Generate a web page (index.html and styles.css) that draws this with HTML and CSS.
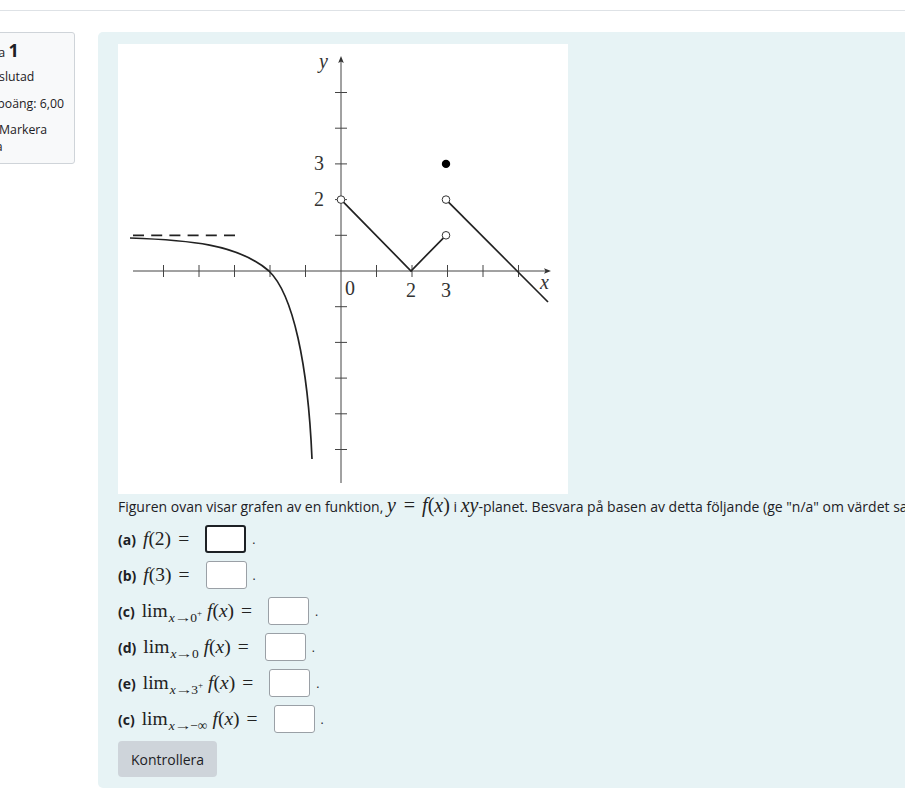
FILE: index.html
```html
<!DOCTYPE html>
<html lang="sv">
<head>
<meta charset="utf-8">
<title>Fråga 1</title>
<link rel="stylesheet" href="styles.css">
</head>
<body>
<div class="topbar"></div>
<div class="page">
  <div class="info">
    <div class="qno">Fråga <span class="num">1</span></div>
    <div class="state">Ej avslutad</div>
    <div class="grade">Maxpoäng: 6,00</div>
    <div class="flag"><svg class="flagicon" width="16" height="14" viewBox="0 0 16 14"><path d="M2 1v12M2 2h9l-2 3 2 3H2" fill="none" stroke="#6a737b" stroke-width="1.4"/></svg>Markera fråga</div>
  </div>
  <div class="content">
    <div class="figure">
      <svg width="450" height="450" viewBox="0 0 450 450" xmlns="http://www.w3.org/2000/svg">
        <g stroke="#444" stroke-width="1" fill="none">
          <line x1="15" y1="227" x2="430" y2="227"/>
          <line x1="223" y1="439" x2="223" y2="15"/>
          <line x1="45.5" y1="221" x2="45.5" y2="233"/>
          <line x1="81" y1="221" x2="81" y2="233"/>
          <line x1="116.5" y1="221" x2="116.5" y2="233"/>
          <line x1="152" y1="221" x2="152" y2="233"/>
          <line x1="187.5" y1="221" x2="187.5" y2="233"/>
          <line x1="258.5" y1="221" x2="258.5" y2="233"/>
          <line x1="294" y1="221" x2="294" y2="233"/>
          <line x1="329.5" y1="221" x2="329.5" y2="233"/>
          <line x1="365" y1="221" x2="365" y2="233"/>
          <line x1="400.5" y1="221" x2="400.5" y2="233"/>
          <line x1="217" y1="48.5" x2="229" y2="48.5"/>
          <line x1="217" y1="84.2" x2="229" y2="84.2"/>
          <line x1="217" y1="119.9" x2="229" y2="119.9"/>
          <line x1="217" y1="155.6" x2="229" y2="155.6"/>
          <line x1="217" y1="191.3" x2="229" y2="191.3"/>
          <line x1="217" y1="262.7" x2="229" y2="262.7"/>
          <line x1="217" y1="298.4" x2="229" y2="298.4"/>
          <line x1="217" y1="334.1" x2="229" y2="334.1"/>
          <line x1="217" y1="369.8" x2="229" y2="369.8"/>
          <line x1="217" y1="405.5" x2="229" y2="405.5"/>
        </g>
        <path d="M223 12 L220.2 19 L223 17.5 L225.8 19 Z" fill="#333"/>
        <path d="M433 227 L426 224.2 L427.5 227 L426 229.8 Z" fill="#333"/>
        <g font-family="'Liberation Serif', 'DejaVu Serif', serif" font-size="20" fill="#333">
          <text x="201" y="24" font-style="italic">y</text>
          <text x="422" y="245" font-style="italic">x</text>
          <text x="227" y="251">0</text>
          <text x="288" y="253">2</text>
          <text x="323" y="253">3</text>
          <text x="196" y="126">3</text>
          <text x="196" y="162">2</text>
        </g>
        <line x1="15" y1="191.3" x2="117" y2="191.3" stroke="#222" stroke-width="1.7" stroke-dasharray="11 7.2"/>
        <path d="M12 194 C 70 196 120 200 151 227 C 175 250 190 320 194 415" stroke="#222" stroke-width="1.7" fill="none"/>
        <polyline points="223,155.6 293,227 328,191.3" stroke="#222" stroke-width="1.7" fill="none"/>
        <line x1="328" y1="155.6" x2="430" y2="258" stroke="#222" stroke-width="1.7"/>
        <circle cx="223" cy="155.6" r="3.8" fill="#fff" stroke="#333" stroke-width="1"/>
        <circle cx="328" cy="191.3" r="3.8" fill="#fff" stroke="#333" stroke-width="1"/>
        <circle cx="328" cy="155.6" r="3.8" fill="#fff" stroke="#333" stroke-width="1"/>
        <circle cx="328" cy="119.9" r="4.2" fill="#000"/>
      </svg>
    </div>
    <p class="prompt">Figuren ovan visar grafen av en funktion, <span class="m"><i>y</i><span class="eq">=</span><i>f</i>(<i>x</i>)</span> i <span class="m"><i>xy</i></span>-planet. Besvara på basen av detta följande (ge "n/a" om värdet saknas).</p>
    <div class="row first"><b class="lbl">(a)</b><span class="m"><i>f</i>(2)<span class="eq">=</span></span><span class="box focus"></span><span class="dot">.</span></div>
    <div class="row"><b class="lbl">(b)</b><span class="m"><i>f</i>(3)<span class="eq">=</span></span><span class="box"></span><span class="dot">.</span></div>
    <div class="row"><b class="lbl">(c)</b><span class="m">lim<span class="sub"><i>x</i><span class="arr">→</span>0<sup>+</sup></span><i>f</i>(<i>x</i>)<span class="eq">=</span></span><span class="box"></span><span class="dot">.</span></div>
    <div class="row"><b class="lbl">(d)</b><span class="m">lim<span class="sub"><i>x</i><span class="arr">→</span>0</span><i>f</i>(<i>x</i>)<span class="eq">=</span></span><span class="box"></span><span class="dot">.</span></div>
    <div class="row"><b class="lbl">(e)</b><span class="m">lim<span class="sub"><i>x</i><span class="arr">→</span>3<sup>+</sup></span><i>f</i>(<i>x</i>)<span class="eq">=</span></span><span class="box"></span><span class="dot">.</span></div>
    <div class="row"><b class="lbl">(c)</b><span class="m">lim<span class="sub"><i>x</i><span class="arr">→</span>−∞</span><i>f</i>(<i>x</i>)<span class="eq">=</span></span><span class="box"></span><span class="dot">.</span></div>
    <button class="check" type="button">Kontrollera</button>
  </div>
</div>
</body>
</html>
```
FILE: styles.css
```css
html, body {
  margin: 0;
  padding: 0;
  background: #fff;
  overflow: hidden;
}
body {
  font-family: "Open Sans", "Noto Sans", sans-serif;
  font-size: 14px;
  color: #1d2125;
}
.topbar {
  height: 10px;
  border-bottom: 1px solid #dee2e6;
}
.page {
  display: flex;
  align-items: flex-start;
  gap: 23px;
  margin-top: 21px;
  margin-left: -46px;
}
.info {
  flex: 0 0 auto;
  width: 121px;
  box-sizing: border-box;
  height: 132px;
  padding: 4px 4px 8px 18px;
  background: #f8f9fa;
  border: 1px solid #cfd4d9;
  border-radius: 3px;
  font-size: 12.3px;
  line-height: 17px;
}
.qno {
  font-size: 12.5px;
  line-height: 26px;
}
.qno .num {
  font-size: 18px;
  font-weight: 700;
}
.state { margin-top: 2px; }
.grade { margin-top: 10px; }
.flag { margin-top: 9px; }
.flagicon {
  vertical-align: -2px;
  margin-right: 10px;
}
.content {
  flex: 0 0 auto;
  width: 900px;
  box-sizing: border-box;
  background: #e7f3f5;
  border-radius: 5px;
  padding: 12px 20px 11px 20px;
  height: 756px;
}
.figure {
  width: 450px;
  height: 450px;
  background: #fff;
}
.figure svg { display: block; }
.prompt {
  margin: 0;
  line-height: 23px;
  white-space: nowrap;
}
.prompt .m { font-size: 20px; }
.prompt .eq { margin: 0 7px 0 8px; }
.m {
  font-family: "Liberation Serif", "DejaVu Serif", serif;
  font-size: 19.5px;
  color: #222;
}
.m i { font-style: italic; }
.eq {
  margin: 0 5px 0 7px;
}
.sub {
  font-size: 13.5px;
  position: relative;
  top: 5px;
  margin-left: 1px;
  margin-right: 5px;
}
.arr {
  display: inline-block;
  margin: 0 1px;
  transform: scaleX(1.3);
}
.sub sup {
  font-size: 9px;
  vertical-align: 6px;
}
.row {
  height: 36px;
  display: flex;
  align-items: center;
  white-space: nowrap;
}
.row.first { margin-top: 3px; }
.lbl {
  font-weight: 700;
  margin-right: 7px;
}
.box {
  display: inline-block;
  width: 41px;
  height: 28px;
  box-sizing: border-box;
  border: 1px solid #9aa0a6;
  border-radius: 3px;
  background: #fff;
  margin-left: 11px;
}
.box.focus {
  border: 2px solid #1d2125;
}
.dot {
  margin-left: 6px;
  font-size: 12px;
}
.check {
  margin-top: 4px;
  height: 36px;
  width: 99px;
  padding: 0;
  border: none;
  border-radius: 4px;
  background: #ced4da;
  color: #1d2125;
  font-family: "Open Sans", "Noto Sans", sans-serif;
  font-size: 14px;
}
```
